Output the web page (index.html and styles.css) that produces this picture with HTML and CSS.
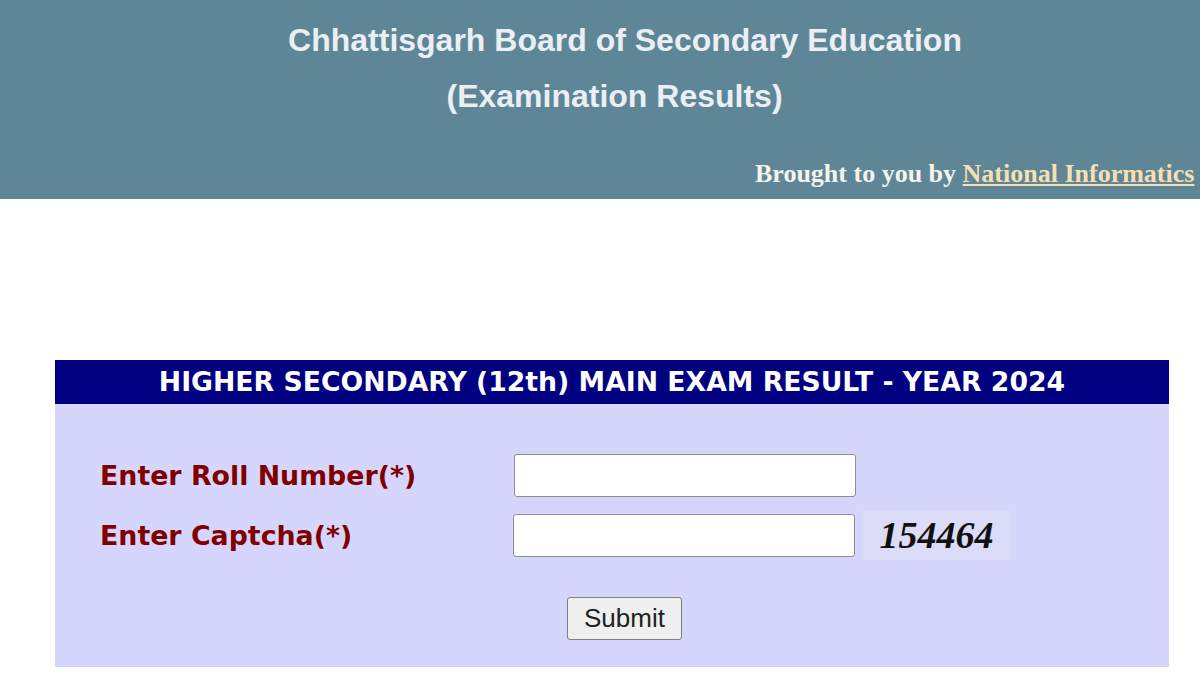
FILE: index.html
```html
<!DOCTYPE html>
<html lang="en">
<head>
  <meta charset="UTF-8">
  <title>CGBSE Examination Results</title>
  <link rel="stylesheet" href="styles.css">
</head>
<body>
  <!-- HEADER -->
  <div class="header">
    <div class="title">Chhattisgarh Board of Secondary Education</div>
    <div class="subtitle">(Examination Results)</div>
    <div class="credit">Brought to you by <a href="#">National Informatics</a></div>
  </div>

  <!-- RESULT FORM -->
  <div class="panel">
    <div class="panel-head">HIGHER SECONDARY (12th) MAIN EXAM RESULT - YEAR 2024</div>
    <form class="panel-body" onsubmit="return false;">
      <div class="form-grid">
        <label class="lbl" for="roll">Enter Roll Number(*)</label>
        <div class="field"><input type="text" id="roll" class="txt"></div>

        <label class="lbl" for="cap">Enter Captcha(*)</label>
        <div class="field">
          <input type="text" id="cap" class="txt txt-cap">
          <span class="captcha">154464</span>
        </div>
      </div>
      <div class="actions">
        <button type="submit" class="btn">Submit</button>
      </div>
    </form>
  </div>
</body>
</html>
```

FILE: styles.css
```css
/* === HEADER === */
body {
  margin: 0;
  padding: 0;
  background: #fff;
  overflow: hidden;
}

.header {
  height: 199px;
  background: #5e8696;
  font-family: 'Liberation Sans', Arial, sans-serif;
  font-weight: bold;
  color: #e9eff5;
  text-align: center;
  padding-left: 50px;
  box-sizing: border-box;
  white-space: nowrap;
  overflow: hidden;
}

.title {
  font-size: 32px;
  line-height: 37px;
  padding-top: 22px;
}

.subtitle {
  font-size: 32px;
  line-height: 37px;
  padding-top: 19px;
  padding-right: 21px;
}

.credit {
  font-family: 'Liberation Serif', 'Times New Roman', serif;
  font-size: 26px;
  line-height: 30px;
  color: #f4f4ee;
  text-align: left;
  padding-left: 705px;
  padding-top: 44px;
}

.credit a {
  color: #f6dfb0;
}

/* === PANEL === */
.panel {
  width: 1114px;
  margin: 161px 0 0 55px;
  font-family: 'DejaVu Sans', Verdana, sans-serif;
}

.panel-head {
  height: 44px;
  line-height: 44px;
  background: #000080;
  color: #fff;
  font-weight: bold;
  font-size: 26.7px;
  text-align: center;
  white-space: nowrap;
}

.panel-body {
  margin: 0;
  background: #d6d6fc;
  height: 263px;
  padding: 50px 0 0 45px;
  box-sizing: border-box;
}

.form-grid {
  display: grid;
  grid-template-columns: 414px auto;
  row-gap: 17px;
  align-items: center;
}

.lbl {
  color: #800000;
  font-weight: bold;
  font-size: 26.8px;
  white-space: nowrap;
}

.field {
  display: flex;
  align-items: center;
  gap: 7px;
  height: 43px;
}

.txt {
  width: 342px;
  height: 43px;
  box-sizing: border-box;
  border: 1px solid #8d8d94;
  border-radius: 3px;
  background: #fff;
  margin: 0;
}

.txt-cap {
  margin-left: -1px;
}

.captcha {
  width: 149px;
  height: 49px;
  line-height: 49px;
  background: #dcdcf8;
  color: #111;
  font-family: 'Liberation Serif', 'Times New Roman', serif;
  font-weight: bold;
  font-style: italic;
  font-size: 38px;
  text-align: center;
}

.actions {
  padding: 40px 0 0 467px;
}

.btn {
  width: 115px;
  height: 43px;
  font-family: 'Liberation Sans', Arial, sans-serif;
  font-size: 26px;
  color: #222;
  background: #efefef;
  border: 1px solid #808080;
  border-radius: 3px;
  padding: 0;
}
```
